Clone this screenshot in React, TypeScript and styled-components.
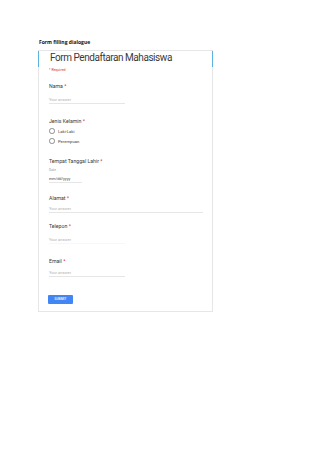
import React from "react";
import styled, { createGlobalStyle } from "styled-components";

const GlobalStyle = createGlobalStyle`
  html, body {
    margin: 0;
    padding: 0;
    background: #ffffff;
  }
`;

interface Question {
  label: string;
  top: number;
  answerTop: number;
  width: number;
  faint?: boolean;
}

const textQuestions: Question[] = [
  { label: "Alamat", top: 11.5, answerTop: 3, width: 154 },
  { label: "Telepon", top: 10.5, answerTop: 6, width: 76, faint: true },
  { label: "Email", top: 14, answerTop: 4, width: 76 },
];

export default function App() {
  return (
    <>
      <GlobalStyle />
      <Page>
        <Caption>Form filling dialogue</Caption>
        <Card>
          <Header>
            <Title>Form Pendaftaran Mahasiswa</Title>
          </Header>
          <Body>
            <Required>* Required</Required>

            <Block $top={9.5}>
              <Label>
                Nama <Star>*</Star>
              </Label>
              <Answer $top={6} $width={76}>
                Your answer
              </Answer>
            </Block>

            <Block $top={14}>
              <Label>
                Jenis Kelamin <Star>*</Star>
              </Label>
              <Options>
                <Option>
                  <Radio />
                  <span>Laki-Laki</span>
                </Option>
                <Option>
                  <Radio />
                  <span>Perempuan</span>
                </Option>
              </Options>
            </Block>

            <Block $top={13}>
              <Label>
                Tempat Tanggal Lahir <Star>*</Star>
              </Label>
              <DateHint>Date</DateHint>
              <DateValue>mm/dd/yyyy</DateValue>
            </Block>

            {textQuestions.map((q) => (
              <Block key={q.label} $top={q.top}>
                <Label>
                  {q.label} <Star>*</Star>
                </Label>
                <Answer $top={q.answerTop} $width={q.width} $faint={q.faint}>
                  Your answer
                </Answer>
              </Block>
            ))}

            <Submit>SUBMIT</Submit>
          </Body>
        </Card>
      </Page>
    </>
  );
}

const Page = styled.div`
  padding: 38.5px 0 0 38px;
`;

const Caption = styled.div`
  margin-left: 1px;
  font-family: "Open Sans", "Liberation Sans", sans-serif;
  font-weight: 700;
  font-size: 5px;
  line-height: 7px;
  color: #111111;
`;

const Card = styled.div`
  box-sizing: border-box;
  width: 175px;
  margin-top: 4.5px;
  border: 1px solid #e6e6e6;
  font-family: Roboto, "Liberation Sans", sans-serif;
`;

const Header = styled.div`
  height: 16px;
  margin: 0 -1px;
  padding-left: 11px;
  border-left: 1.5px solid #5db3dc;
  border-right: 1.5px solid #5db3dc;
`;

const Title = styled.div`
  font-size: 10px;
  line-height: 13px;
  letter-spacing: -0.45px;
  color: #3a3a3a;
`;

const Body = styled.div`
  padding: 0 9px 7px 10px;
`;

const Required = styled.div`
  font-size: 3.6px;
  line-height: 6px;
  color: #d93025;
`;

const Block = styled.div<{ $top: number }>`
  margin-top: ${(p) => p.$top}px;
`;

const Label = styled.div`
  font-size: 5.2px;
  line-height: 7px;
  color: #3a3a3a;
`;

const Star = styled.span`
  color: #d93025;
`;

const Answer = styled.div<{ $top: number; $width: number; $faint?: boolean }>`
  width: ${(p) => p.$width}px;
  margin-top: ${(p) => p.$top}px;
  font-size: 4px;
  line-height: 7px;
  color: #b0b0b0;
  border-bottom: 1px solid ${(p) => (p.$faint ? "#f7f7f7" : "#e6e6e6")};
`;

const Options = styled.div`
  display: flex;
  flex-direction: column;
  gap: 3px;
  margin-top: 3px;
`;

const Option = styled.div`
  display: flex;
  align-items: center;
  gap: 3.5px;
  height: 7px;
  font-size: 4.2px;
  color: #444444;
`;

const Radio = styled.span`
  box-sizing: border-box;
  width: 5.5px;
  height: 5.5px;
  border: 0.6px solid #8a8a8a;
  border-radius: 50%;
`;

const DateHint = styled.div`
  margin-top: 3px;
  font-size: 3.4px;
  line-height: 5px;
  color: #a0a0a0;
`;

const DateValue = styled.div`
  width: 33px;
  margin-top: 3.5px;
  font-size: 3.8px;
  line-height: 6px;
  color: #444444;
  border-bottom: 1px solid #e6e6e6;
`;

const Submit = styled.button`
  display: block;
  box-sizing: border-box;
  width: 25px;
  height: 9px;
  margin: 17.5px 0 0 -1px;
  padding: 0;
  border: none;
  border-radius: 1px;
  background: #4285f4;
  color: #ffffff;
  font-family: Roboto, "Liberation Sans", sans-serif;
  font-size: 3.2px;
  font-weight: 500;
  letter-spacing: 0.1px;
`;
